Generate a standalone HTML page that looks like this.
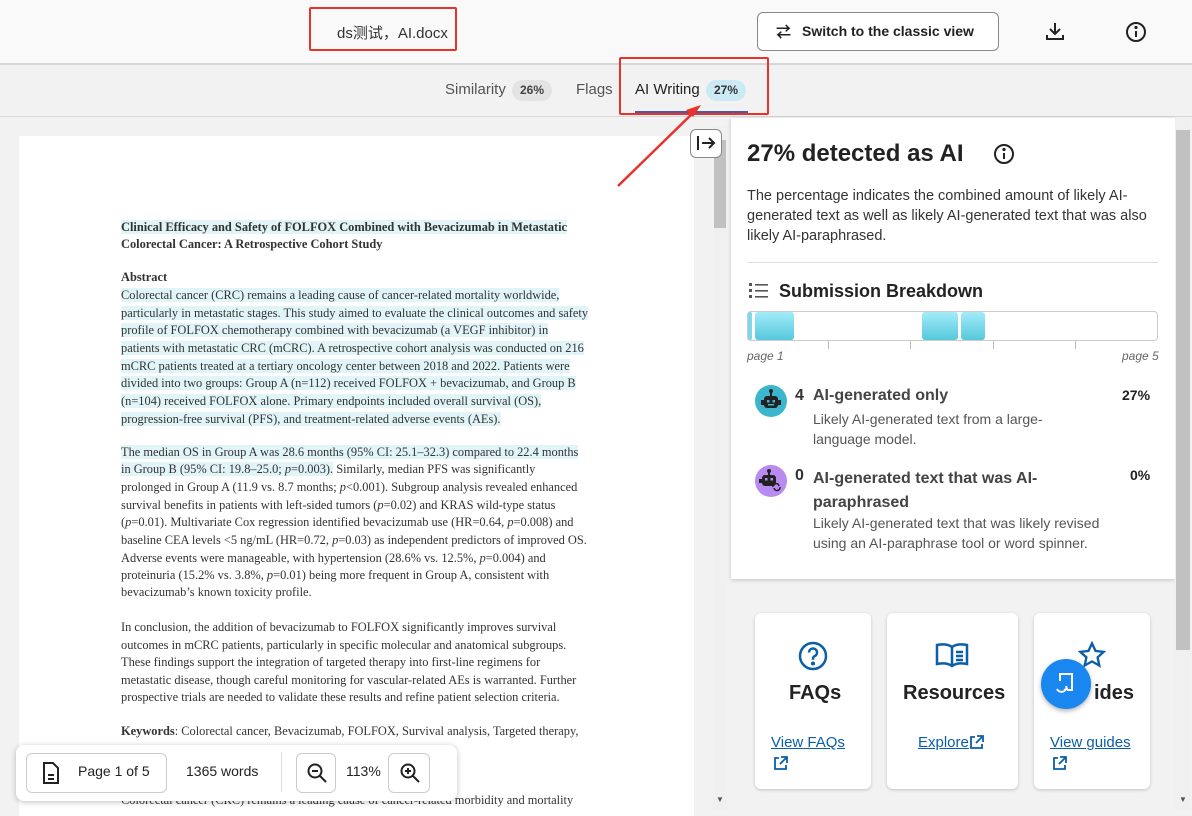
<!DOCTYPE html>
<html><head><meta charset="utf-8">
<style>
*{margin:0;padding:0;box-sizing:border-box}
body{width:1192px;height:810px;overflow:hidden;background:#f2f2f2;font-family:"Liberation Sans","Noto Sans CJK SC",sans-serif;color:#222;position:relative}
.abs{position:absolute}
.hdr{left:0;top:0;width:1192px;height:65px;background:#f9f9f9;border-bottom:2px solid #d6d6d6}
.tabs{left:0;top:66px;width:1192px;height:51px;background:#f2f2f2;border-bottom:1px solid #d8d8d8}
.page{left:19px;top:136px;width:675px;height:680px;background:#fff}
.ln{position:absolute;left:121px;font-family:"Liberation Serif",serif;font-size:12.4px;line-height:18px;color:#333;white-space:nowrap}
.hl{background:#e1f4f8}
.b{font-weight:bold}
.card{background:#fff;border-radius:6px;box-shadow:0 1px 3px rgba(0,0,0,.2)}
.lk{color:#0b5ea8;text-decoration:underline;font-size:15px}
</style></head><body>
<div class="abs hdr"></div>
<div class="abs" style="left:309px;top:7px;width:148px;height:44px;border:2px solid #e8322a;border-radius:2px"></div>
<div class="abs" style="left:337px;top:22px;font-size:15px;color:#333">ds测试，AI.docx</div>
<div class="abs" style="left:757px;top:12px;width:242px;height:39px;border:1px solid #888;border-radius:6px;background:#fff"></div>
<div class="abs" style="left:776px;top:21px;font-size:15px;font-weight:bold">⇄</div>
<div class="abs" style="left:802px;top:23px;font-size:14px;color:#222;font-weight:600">Switch to the classic view</div>
<svg class="abs" style="left:1045px;top:21px" width="20" height="20" viewBox="0 0 20 20" fill="none" stroke="#222" stroke-width="2"><path d="M10 2v11M5 8l5 5 5-5M2 14v4h16v-4"/></svg>
<svg class="abs" style="left:1125px;top:21px" width="22" height="22" viewBox="0 0 22 22" fill="none" stroke="#222" stroke-width="2"><circle cx="11" cy="11" r="9"/><path d="M11 10v6"/><circle cx="11" cy="6.5" r=".6" fill="#222"/></svg>

<div class="abs tabs"></div>
<div class="abs" style="left:445px;top:81px;font-size:15px;color:#555">Similarity</div>
<div class="abs" style="left:512px;top:80px;width:40px;height:21px;border-radius:11px;background:#e4e4e4;font-size:12px;font-weight:bold;text-align:center;line-height:21px;color:#444">26%</div>
<div class="abs" style="left:576px;top:81px;font-size:15px;color:#555">Flags</div>
<div class="abs" style="left:635px;top:81px;font-size:15px;color:#222">AI Writing</div>
<div class="abs" style="left:706px;top:80px;width:40px;height:21px;border-radius:11px;background:#cbeaf3;font-size:12px;font-weight:bold;text-align:center;line-height:21px;color:#333">27%</div>
<div class="abs" style="left:635px;top:111px;width:113px;height:3px;background:#4a5aa8"></div>
<div class="abs" style="left:619px;top:57px;width:150px;height:58px;border:2px solid #e8322a;border-radius:2px"></div>

<div class="abs page"></div>
<div class="ln b" style="top:218px"><span class="hl">Clinical Efficacy and Safety of FOLFOX Combined with Bevacizumab in Metastatic</span></div>
<div class="ln b" style="top:235px">Colorectal Cancer: A Retrospective Cohort Study</div>
<div class="ln b" style="top:268px">Abstract</div>
<div class="ln" style="top:286px"><span class="hl">Colorectal cancer (CRC) remains a leading cause of cancer-related mortality worldwide,</span></div>
<div class="ln" style="top:304px"><span class="hl">particularly in metastatic stages. This study aimed to evaluate the clinical outcomes and safety</span></div>
<div class="ln" style="top:321px"><span class="hl">profile of FOLFOX chemotherapy combined with bevacizumab (a VEGF inhibitor) in</span></div>
<div class="ln" style="top:339px"><span class="hl">patients with metastatic CRC (mCRC). A retrospective cohort analysis was conducted on 216</span></div>
<div class="ln" style="top:357px"><span class="hl">mCRC patients treated at a tertiary oncology center between 2018 and 2022. Patients were</span></div>
<div class="ln" style="top:374px"><span class="hl">divided into two groups: Group A (n=112) received FOLFOX + bevacizumab, and Group B</span></div>
<div class="ln" style="top:392px"><span class="hl">(n=104) received FOLFOX alone. Primary endpoints included overall survival (OS),</span></div>
<div class="ln" style="top:410px"><span class="hl">progression-free survival (PFS), and treatment-related adverse events (AEs).</span></div>
<div class="ln" style="top:443px"><span class="hl">The median OS in Group A was 28.6 months (95% CI: 25.1–32.3) compared to 22.4 months</span></div>
<div class="ln" style="top:460px"><span class="hl">in Group B (95% CI: 19.8–25.0; <i>p</i>=0.003).</span> Similarly, median PFS was significantly</div>
<div class="ln" style="top:478px">prolonged in Group A (11.9 vs. 8.7 months; <i>p</i>&lt;0.001). Subgroup analysis revealed enhanced</div>
<div class="ln" style="top:496px">survival benefits in patients with left-sided tumors (<i>p</i>=0.02) and KRAS wild-type status</div>
<div class="ln" style="top:513px">(<i>p</i>=0.01). Multivariate Cox regression identified bevacizumab use (HR=0.64, <i>p</i>=0.008) and</div>
<div class="ln" style="top:531px">baseline CEA levels &lt;5 ng/mL (HR=0.72, <i>p</i>=0.03) as independent predictors of improved OS.</div>
<div class="ln" style="top:549px">Adverse events were manageable, with hypertension (28.6% vs. 12.5%, <i>p</i>=0.004) and</div>
<div class="ln" style="top:566px">proteinuria (15.2% vs. 3.8%, <i>p</i>=0.01) being more frequent in Group A, consistent with</div>
<div class="ln" style="top:583px">bevacizumab’s known toxicity profile.</div>
<div class="ln" style="top:618px">In conclusion, the addition of bevacizumab to FOLFOX significantly improves survival</div>
<div class="ln" style="top:636px">outcomes in mCRC patients, particularly in specific molecular and anatomical subgroups.</div>
<div class="ln" style="top:653px">These findings support the integration of targeted therapy into first-line regimens for</div>
<div class="ln" style="top:671px">metastatic disease, though careful monitoring for vascular-related AEs is warranted. Further</div>
<div class="ln" style="top:688px">prospective trials are needed to validate these results and refine patient selection criteria.</div>
<div class="ln" style="top:722px"><b>Keywords</b>: Colorectal cancer, Bevacizumab, FOLFOX, Survival analysis, Targeted therapy,</div>
<div class="ln" style="top:791px">Colorectal cancer (CRC) remains a leading cause of cancer-related morbidity and mortality</div>

<div class="abs" style="left:713px;top:126px;width:14px;height:684px;background:#f0f0f0"></div>
<div class="abs" style="left:714px;top:140px;width:12px;height:88px;background:#c1c1c1"></div>
<svg class="abs" style="left:610px;top:100px" width="100" height="90"><path d="M8 86L86 10" stroke="#e8322a" stroke-width="2.5"/><path d="M91 5l-15 5 7 7z" fill="#e8322a"/></svg>
<div class="abs" style="left:690px;top:129px;width:32px;height:29px;border:1px solid #888;border-radius:6px;background:#fff"></div>
<svg class="abs" style="left:696px;top:134px" width="20" height="18" viewBox="0 0 20 18" fill="none" stroke="#222" stroke-width="2"><path d="M2 2v14M6 9h12M13 4l5 5-5 5"/></svg>

<div class="abs card" style="left:16px;top:745px;width:441px;height:56px;border-radius:8px;box-shadow:0 1px 6px rgba(0,0,0,.25)"></div>
<div class="abs" style="left:26px;top:753px;width:141px;height:40px;border:1px solid #ccc;border-radius:6px"></div>
<svg class="abs" style="left:42px;top:762px" width="18" height="22" viewBox="0 0 18 22" fill="none" stroke="#222" stroke-width="2"><path d="M2 1h9l5 5v15H2z"/><path d="M6 13h6M6 17h6"/></svg>
<div class="abs" style="left:78px;top:763px;font-size:14px">Page 1 of 5</div>
<div class="abs" style="left:186px;top:763px;font-size:14px">1365 words</div>
<div class="abs" style="left:281px;top:752px;width:1px;height:40px;background:#ddd"></div>
<div class="abs" style="left:296px;top:753px;width:40px;height:40px;border:1px solid #ccc;border-radius:6px"></div>
<div class="abs" style="left:388px;top:753px;width:42px;height:40px;border:1px solid #ccc;border-radius:6px"></div>
<svg class="abs" style="left:306px;top:762px" width="22" height="22" viewBox="0 0 22 22" fill="none" stroke="#222" stroke-width="2"><circle cx="9" cy="9" r="6.5"/><path d="M14 14l6 6M6 9h6"/></svg>
<div class="abs" style="left:346px;top:763px;font-size:14px">113%</div>
<svg class="abs" style="left:399px;top:762px" width="22" height="22" viewBox="0 0 22 22" fill="none" stroke="#222" stroke-width="2"><circle cx="9" cy="9" r="6.5"/><path d="M14 14l6 6M6 9h6M9 6v6"/></svg>

<div class="abs" style="left:731px;top:118px;width:444px;height:461px;background:#fff;box-shadow:0 1px 4px rgba(0,0,0,.2)"></div>
<div class="abs" style="left:747px;top:140px;font-size:24px;font-weight:600;color:#222">27% detected as AI</div>
<svg class="abs" style="left:993px;top:143px" width="22" height="22" viewBox="0 0 22 22" fill="none" stroke="#222" stroke-width="2"><circle cx="11" cy="11" r="9"/><path d="M11 10v6"/><circle cx="11" cy="6.5" r=".6" fill="#222"/></svg>
<div class="abs" style="left:747px;top:186px;width:410px;font-size:14.5px;line-height:20px;color:#333">The percentage indicates the combined amount of likely AI-generated text as well as likely AI-generated text that was also likely AI-paraphrased.</div>
<div class="abs" style="left:747px;top:262px;width:411px;height:1px;background:#ddd"></div>
<svg class="abs" style="left:749px;top:282px" width="20" height="18" viewBox="0 0 20 18" fill="#555"><rect x="0" y="1" width="3" height="3"/><rect x="0" y="7" width="3" height="3"/><rect x="0" y="13" width="3" height="3"/><rect x="6" y="2" width="13" height="1.6"/><rect x="6" y="8" width="13" height="1.6"/><rect x="6" y="14" width="13" height="1.6"/></svg>
<div class="abs" style="left:779px;top:281px;font-size:18px;font-weight:600;color:#222">Submission Breakdown</div>
<div class="abs" style="left:747px;top:311px;width:411px;height:30px;border:1px solid #ccc;border-radius:4px"></div>
<div class="abs" style="left:748px;top:312px;width:4px;height:28px;background:#7fd8ea;border-radius:2px"></div>
<div class="abs" style="left:755px;top:312px;width:39px;height:28px;background:linear-gradient(#a2ecf8,#55c8dd);border-radius:3px"></div>
<div class="abs" style="left:922px;top:312px;width:36px;height:28px;background:linear-gradient(#a2ecf8,#55c8dd);border-radius:3px"></div>
<div class="abs" style="left:961px;top:312px;width:24px;height:28px;background:linear-gradient(#a2ecf8,#55c8dd);border-radius:3px"></div>
<div class="abs" style="left:828px;top:341px;width:1px;height:8px;background:#bbb"></div>
<div class="abs" style="left:910px;top:341px;width:1px;height:8px;background:#bbb"></div>
<div class="abs" style="left:993px;top:341px;width:1px;height:8px;background:#bbb"></div>
<div class="abs" style="left:1075px;top:341px;width:1px;height:8px;background:#bbb"></div>
<div class="abs" style="left:747px;top:349px;font-size:12px;font-style:italic;color:#666">page 1</div>
<div class="abs" style="left:1122px;top:349px;font-size:12px;font-style:italic;color:#666">page 5</div>
<div class="abs" style="left:755px;top:385px;width:32px;height:32px;border-radius:50%;background:#3bb6cc"></div>
<svg class="abs" style="left:760px;top:388px" width="22" height="24" viewBox="0 0 22 24" fill="#222"><circle cx="11" cy="3" r="2"/><rect x="10" y="4" width="2" height="4"/><rect x="4" y="8" width="14" height="12" rx="3"/><rect x="1" y="12" width="3" height="5"/><rect x="18" y="12" width="3" height="5"/><rect x="7" y="12" width="2.5" height="2.5" fill="#3bb6cc"/><rect x="12.5" y="12" width="2.5" height="2.5" fill="#3bb6cc"/><rect x="8" y="16" width="6" height="1.5" fill="#3bb6cc"/></svg>
<div class="abs" style="left:795px;top:387px;font-size:16px;font-weight:600;color:#333">4</div>
<div class="abs" style="left:813px;top:387px;font-size:16px;font-weight:600;color:#444">AI-generated only</div>
<div class="abs" style="left:1122px;top:387px;font-size:14px;font-weight:600">27%</div>
<div class="abs" style="left:813px;top:409px;width:260px;font-size:14px;line-height:20px;color:#555">Likely AI-generated text from a large-language model.</div>
<div class="abs" style="left:755px;top:465px;width:32px;height:32px;border-radius:50%;background:#b98af0"></div>
<svg class="abs" style="left:759px;top:468px" width="24" height="24" viewBox="0 0 24 24" fill="#222"><circle cx="10" cy="3" r="2"/><rect x="9" y="4" width="2" height="3"/><rect x="3" y="7" width="14" height="11" rx="3"/><rect x="0" y="11" width="3" height="4"/><rect x="6" y="10" width="2.5" height="2.5" fill="#b98af0"/><rect x="11.5" y="10" width="2.5" height="2.5" fill="#b98af0"/><path d="M14 19a3 3 0 0 1 6-1M21 19a3 3 0 0 1-6 1" stroke="#222" stroke-width="1.5" fill="none"/></svg>
<div class="abs" style="left:795px;top:467px;font-size:16px;font-weight:600;color:#333">0</div>
<div class="abs" style="left:813px;top:467px;width:300px;font-size:16px;font-weight:600;line-height:24px;color:#444">AI-generated text that was AI-<br>paraphrased</div>
<div class="abs" style="left:1130px;top:467px;font-size:14px;font-weight:600">0%</div>
<div class="abs" style="left:813px;top:513px;width:320px;font-size:14px;line-height:20px;color:#555">Likely AI-generated text that was likely revised using an AI-paraphrase tool or word spinner.</div>

<div class="abs card" style="left:755px;top:613px;width:116px;height:176px"></div>
<div class="abs card" style="left:887px;top:613px;width:131px;height:176px"></div>
<div class="abs card" style="left:1034px;top:613px;width:116px;height:176px"></div>
<svg class="abs" style="left:797px;top:640px" width="32" height="32" viewBox="0 0 32 32" fill="none" stroke="#0b5ea8" stroke-width="2.5"><circle cx="16" cy="16" r="13"/><path d="M12 12.5a4 4 0 1 1 5.5 3.7c-1 .5-1.5 1.3-1.5 2.5v1"/><circle cx="16" cy="23.5" r=".8" fill="#0b5ea8"/></svg>
<div class="abs" style="left:789px;top:682px;font-size:20px;font-weight:600">FAQs</div>
<div class="abs lk" style="left:771px;top:734px">View FAQs</div>
<svg class="abs" style="left:773px;top:756px" width="15" height="15" viewBox="0 0 15 15" fill="none" stroke="#0b5ea8" stroke-width="1.8"><path d="M6 2H2v11h11V9M8 1h6v6M14 1L7 8"/></svg>
<svg class="abs" style="left:935px;top:642px" width="34" height="26" viewBox="0 0 34 26" fill="none" stroke="#0b5ea8" stroke-width="2.5"><path d="M17 5C13 2 7 2 2 3v19c5-1 11-1 15 2 4-3 10-3 15-2V3c-5-1-11-1-15 2zM17 5v19M21 10h7M21 14h7M21 18h7"/></svg>
<div class="abs" style="left:903px;top:682px;font-size:20px;font-weight:600">Resources</div>
<div class="abs lk" style="left:918px;top:734px">Explore</div>
<svg class="abs" style="left:969px;top:735px" width="15" height="15" viewBox="0 0 15 15" fill="none" stroke="#0b5ea8" stroke-width="1.8"><path d="M6 2H2v11h11V9M8 1h6v6M14 1L7 8"/></svg>
<svg class="abs" style="left:1078px;top:641px" width="28" height="28" viewBox="0 0 24 24" fill="none" stroke="#0b5ea8" stroke-width="2"><path d="M12 2l3 6.5 7 .8-5.2 4.8 1.5 7L12 17.5 5.7 21l1.5-7L2 9.3l7-.8z"/></svg>
<div class="abs" style="left:1094px;top:682px;font-size:20px;font-weight:600">ides</div>
<div class="abs" style="left:1041px;top:659px;width:50px;height:50px;border-radius:50%;background:#1a86f0;box-shadow:0 2px 5px rgba(0,0,0,.3)"></div>
<svg class="abs" style="left:1054px;top:671px" width="24" height="26" viewBox="0 0 24 26" fill="none" stroke="#fff" stroke-width="2"><path d="M6 10V3h12v16h-5M3 18a5 5 0 0 0 9 0M12 15l1 3-3 1"/></svg>
<div class="abs lk" style="left:1050px;top:734px">View guides</div>
<svg class="abs" style="left:1052px;top:756px" width="15" height="15" viewBox="0 0 15 15" fill="none" stroke="#0b5ea8" stroke-width="1.8"><path d="M6 2H2v11h11V9M8 1h6v6M14 1L7 8"/></svg>

<div class="abs" style="left:1175px;top:118px;width:16px;height:692px;background:#f0f0f0"></div>
<div class="abs" style="left:1176px;top:130px;width:14px;height:520px;background:#c1c1c1"></div>
<div class="abs" style="left:716px;top:795px;font-size:8px;color:#555">▼</div>
<div class="abs" style="left:1179px;top:795px;font-size:8px;color:#555">▼</div>
</body></html>
